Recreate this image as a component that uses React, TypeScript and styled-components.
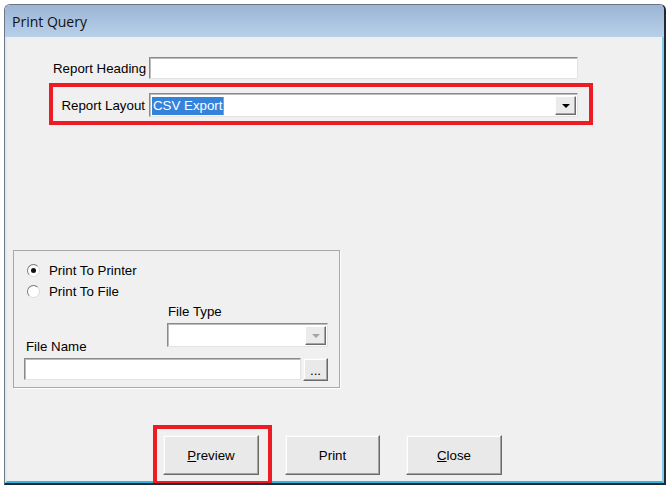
import React from "react";
import styled, { createGlobalStyle } from "styled-components";

const GlobalStyle = createGlobalStyle`
  html, body {
    margin: 0;
    padding: 0;
    background: #ffffff;
  }
  body {
    font-family: "Liberation Sans", Arial, sans-serif;
    font-size: 13.3px;
    color: #000;
  }
`;

const Window = styled.div`
  margin: 4px 0 0 4px;
  width: 662px;
  box-sizing: border-box;
  display: flex;
  flex-direction: column;
  border: 1px solid #6d7784;
  border-right: 2px solid #1e2a36;
  border-bottom: 2px solid #1e2a36;
  border-radius: 6px 6px 0 0;
  overflow: hidden;
`;

const TitleBar = styled.div`
  height: 32px;
  display: flex;
  align-items: center;
  padding-left: 7px;
  background: linear-gradient(#9bb5d4, #b8d0e9);
  font-family: "Segoe UI", "Open Sans", sans-serif;
  font-size: 14px;
  color: #111;
`;

const Body = styled.div`
  display: flex;
  flex-direction: column;
  background: #f0f0f0;
  border-left: 2px solid #e4e9ef;
  border-right: 2px solid #7fcbe8;
  border-bottom: 2px solid #37b3dc;
  padding: 16px 4px 6px 0;
`;

const Form = styled.div`
  display: flex;
  flex-direction: column;
  padding-left: 42px;
`;

const FieldRow = styled.div<{ $highlight?: boolean }>`
  width: 544px;
  box-sizing: border-box;
  display: flex;
  align-items: center;
  gap: 4px;
  border: 4px solid ${(p) => (p.$highlight ? "#ed1c24" : "transparent")};
  padding: ${(p) => (p.$highlight ? "6px 0 4px" : "0")};
`;

const FieldLabel = styled.label`
  width: 92px;
  text-align: right;
  white-space: nowrap;
`;

const TextBox = styled.div<{ $width: number }>`
  width: ${(p) => p.$width}px;
  height: 22px;
  box-sizing: border-box;
  background: #fff;
  border: 1px solid;
  border-color: #8a8a8a #e3e3e3 #e3e3e3 #8a8a8a;
  box-shadow: inset 1px 1px 0 #bcbcbc;
`;

const Combo = styled.div<{ $width: number }>`
  width: ${(p) => p.$width}px;
  height: 24px;
  box-sizing: border-box;
  display: flex;
  align-items: stretch;
  background: #fff;
  border: 1px solid;
  border-color: #8a8a8a #e3e3e3 #e3e3e3 #8a8a8a;
  box-shadow: inset 1px 1px 0 #bcbcbc;
  padding: 2px 1px 1px 2px;
`;

const ComboText = styled.div`
  flex: 1;
  display: flex;
  align-items: center;
`;

const Selected = styled.span`
  background: #3582da;
  color: #fff;
  padding: 1px;
  line-height: 16px;
  border-right: 1px solid #f08a24;
`;

const DropButton = styled.div`
  width: 21px;
  box-sizing: border-box;
  display: flex;
  align-items: center;
  justify-content: center;
  background: #ebebeb;
  border: 1px solid;
  border-color: #fdfdfd #6b6b6b #6b6b6b #fdfdfd;
  box-shadow: inset -1px -1px 0 #a5a5a5;
`;

const Arrow = styled.span<{ $disabled?: boolean }>`
  width: 0;
  height: 0;
  border-left: 4px solid transparent;
  border-right: 4px solid transparent;
  border-top: 4px solid ${(p) => (p.$disabled ? "#a3a3a3" : "#000")};
`;

const Spacer = styled.div<{ $h: number }>`
  height: ${(p) => p.$h}px;
`;

const GroupBox = styled.fieldset`
  margin: 0 0 0 6px;
  width: 327px;
  box-sizing: border-box;
  border: 1px solid #a8a8a8;
  box-shadow: 1px 1px 0 #ffffff;
  padding: 11px 0 6px;
  display: flex;
  flex-direction: column;
`;

const RadioList = styled.div`
  display: flex;
  flex-direction: column;
  gap: 5px;
  padding-left: 13px;
`;

const RadioRow = styled.div`
  height: 16px;
  display: flex;
  align-items: center;
  gap: 9px;
`;

const RadioDot = styled.span<{ $checked?: boolean }>`
  width: 13px;
  height: 13px;
  box-sizing: border-box;
  border-radius: 50%;
  border: 1px solid;
  border-color: #7b7b7b #dcdcdc #dcdcdc #7b7b7b;
  background: #fff;
  display: flex;
  align-items: center;
  justify-content: center;

  &::after {
    content: "";
    width: 5px;
    height: 5px;
    border-radius: 50%;
    background: ${(p) => (p.$checked ? "#111" : "transparent")};
  }
`;

const FileArea = styled.div`
  display: flex;
  flex-direction: column;
  gap: 4px;
  padding-left: 10px;
  margin-top: 5px;
`;

const FileTop = styled.div`
  display: flex;
`;

const FileNameCol = styled.div`
  width: 143px;
  display: flex;
  align-items: flex-end;
  padding-left: 2px;
  box-sizing: border-box;
`;

const FileTypeCol = styled.div`
  display: flex;
  flex-direction: column;
  gap: 4px;
  padding-bottom: 7px;
`;

const SmallLabel = styled.span<{ $indent?: number }>`
  line-height: 15px;
  padding-left: ${(p) => p.$indent ?? 0}px;
`;

const FileRow = styled.div`
  display: flex;
  align-items: flex-start;
  gap: 2px;
`;

const PushButton = styled.button<{ $w: number; $h: number }>`
  width: ${(p) => p.$w}px;
  height: ${(p) => p.$h}px;
  padding: 0;
  font-family: "Liberation Sans", Arial, sans-serif;
  font-size: 13.3px;
  color: #000;
  background: #e9e9e9;
  border: 1px solid;
  border-color: #f4f4f4 #6a6a6a #6a6a6a #f4f4f4;
  box-shadow: inset -1px -1px 0 #a3a3a3, inset 1px 1px 0 #ffffff;
  border-radius: 0;
`;

const EllipsisButton = styled(PushButton)`
  display: flex;
  align-items: flex-end;
  justify-content: center;
  padding-bottom: 4px;
  line-height: 10px;
`;

const ButtonBar = styled.div`
  display: flex;
  justify-content: center;
  gap: 26px;
`;

const Highlight = styled.div`
  position: relative;

  &::after {
    content: "";
    position: absolute;
    top: -10px;
    left: -10px;
    right: -13px;
    bottom: -10px;
    border: 4px solid #ed1c24;
    pointer-events: none;
  }
`;

export default function App() {
  return (
    <>
      <GlobalStyle />
      <Window>
        <TitleBar>Print Query</TitleBar>
        <Body>
          <Form>
            <FieldRow>
              <FieldLabel>Report Heading</FieldLabel>
              <TextBox $width={429} />
            </FieldRow>
            <FieldRow $highlight>
              <FieldLabel>Report Layout</FieldLabel>
              <Combo $width={429}>
                <ComboText>
                  <Selected>CSV Export</Selected>
                </ComboText>
                <DropButton>
                  <Arrow />
                </DropButton>
              </Combo>
            </FieldRow>
          </Form>

          <Spacer $h={125} />

          <GroupBox>
            <RadioList>
              <RadioRow>
                <RadioDot $checked />
                <span>Print To Printer</span>
              </RadioRow>
              <RadioRow>
                <RadioDot />
                <span>Print To File</span>
              </RadioRow>
            </RadioList>
            <FileArea>
              <FileTop>
                <FileNameCol>
                  <SmallLabel>File Name</SmallLabel>
                </FileNameCol>
                <FileTypeCol>
                  <SmallLabel $indent={1}>File Type</SmallLabel>
                  <Combo $width={161}>
                    <ComboText />
                    <DropButton>
                      <Arrow $disabled />
                    </DropButton>
                  </Combo>
                </FileTypeCol>
              </FileTop>
              <FileRow>
                <TextBox $width={277} />
                <EllipsisButton $w={25} $h={23}>...</EllipsisButton>
              </FileRow>
            </FileArea>
          </GroupBox>

          <Spacer $h={47} />

          <ButtonBar>
            <Highlight>
              <PushButton $w={96} $h={40}>
                <u>P</u>review
              </PushButton>
            </Highlight>
            <PushButton $w={95} $h={40}>
              Print
            </PushButton>
            <PushButton $w={96} $h={40}>
              <u>C</u>lose
            </PushButton>
          </ButtonBar>
        </Body>
      </Window>
    </>
  );
}
